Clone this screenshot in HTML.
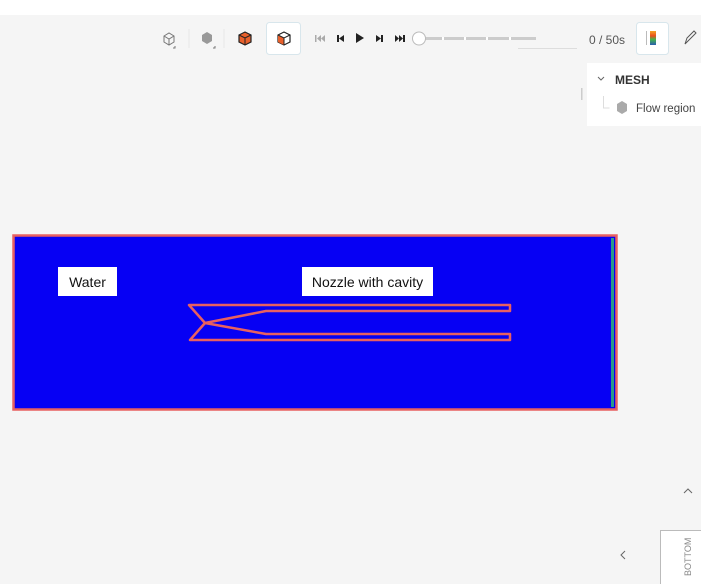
<!DOCTYPE html>
<html><head><meta charset="utf-8"><style>
body{margin:0;width:701px;height:584px;background:#f5f5f5;position:relative;overflow:hidden;font-family:"Liberation Sans",sans-serif}
.top{position:absolute;left:0;top:0;width:701px;height:15px;background:#fff}
.a{position:absolute}
.lbl{position:absolute;background:#fff;color:#111;font-size:14px;display:flex;align-items:center;justify-content:center;height:29px}
</style></head><body>
<div class="top"></div>
<svg class="a" style="left:0;top:0" width="701" height="584">
 <g stroke="#777" fill="none" stroke-width="1">
  <path d="M164 36l5-3 5 3v6l-5 3-5-3z M164 36l5 3 5-3 M169 39v6"/>
  <path d="M173 48h2v-2"/>
 </g>
 <path d="M202 35l5-3 5 3v6l-5 3-5-3z" fill="#999"/>
 <path d="M213 48h2v-2" stroke="#777" fill="none"/>
 <line x1="189" y1="29" x2="189" y2="48" stroke="#e6e6e6"/>
 <line x1="224" y1="29" x2="224" y2="48" stroke="#e6e6e6"/>
 <path d="M239 35l6-3 6 3v7l-6 3-6-3z" fill="#e8602c" stroke="#222" stroke-width="1.2"/>
 <path d="M239 35l6 3 6-3 M245 38v7" stroke="#222" fill="none"/>
 <rect x="266.5" y="22.5" width="34" height="32" rx="3" fill="#fff" stroke="#d8e6ec"/>
 <path d="M278 35l6-3 6 3v7l-6 3-6-3z" fill="#fff" stroke="#222" stroke-width="1.2"/>
 <path d="M278 35l6 3v7l-6-3z" fill="#e8602c"/>
 <path d="M278 35l6 3 6-3 M284 38v7" stroke="#222" fill="none"/>
 <g fill="#aaa"><rect x="315" y="35" width="1.5" height="7"/><path d="M321 35v7l-4-3.5z M325 35v7l-4-3.5z"/></g>
 <g fill="#222"><rect x="337" y="35" width="2" height="7"/><path d="M344 35v7l-5-3.5z"/>
 <path d="M356 33v10l8-5z"/>
 <path d="M376 35v7l5-3.5z"/><rect x="381" y="35" width="2" height="7"/>
 <path d="M395 35v7l4-3.5z M399 35v7l4-3.5z"/><rect x="403" y="35" width="2" height="7"/></g>
 <rect x="420" y="37" width="116" height="3" fill="#ccc"/>
 <g fill="#fff"><rect x="442" y="37" width="2" height="3"/><rect x="464" y="37" width="2" height="3"/><rect x="486" y="37" width="2" height="3"/><rect x="509" y="37" width="2" height="3"/></g>
 <circle cx="419" cy="38.5" r="6.5" fill="#fff" stroke="#bbb"/>
 <line x1="518" y1="48.5" x2="577" y2="48.5" stroke="#ddd"/>
 <text x="589" y="44" font-size="12" fill="#555">0 / 50s</text>
 <rect x="636.5" y="22.5" width="32" height="32" rx="3" fill="#fff" stroke="#d8e6ec"/>
 <rect x="646" y="31" width="1" height="14" fill="#bbb"/>
 <defs><linearGradient id="g" x1="0" y1="0" x2="0" y2="1"><stop offset="0" stop-color="#f5a623"/><stop offset=".35" stop-color="#e94e1b"/><stop offset=".6" stop-color="#44b549"/><stop offset="1" stop-color="#2a5db0"/></linearGradient></defs>
 <rect x="650" y="31" width="6" height="14" fill="url(#g)"/>
 <path d="M685 44l2-6 7-7 2 2-7 7z" fill="none" stroke="#555"/>
 <rect x="587" y="63" width="114" height="63" fill="#fff"/>
 <path d="M598 77l3 3 3-3" stroke="#666" fill="none"/>
 <text x="615" y="84" font-size="12" font-weight="bold" fill="#333">MESH</text>
 <path d="M603.5 96v12h6" stroke="#ddd" fill="none"/>
 <rect x="581" y="88" width="1.5" height="12" fill="#ccc"/>
 <path d="M617 104l5-3 5 3v7l-5 3-5-3z" fill="#aaa"/>
 <text x="636" y="112" font-size="11.5" fill="#444">Flow region</text>
 <rect x="13.5" y="235.5" width="603" height="174" fill="#0600f4" stroke="#e86060" stroke-width="2.5"/>
 <rect x="611" y="238" width="3" height="169" fill="#33c070" opacity=".8"/>
 <path d="M189 305L510 305L510 311L266 311L205 323L266 334L510 334L510 340L190 340L205 323Z" fill="none" stroke="#e86060" stroke-width="2.5" stroke-linejoin="round"/>
 <path d="M684 493l4-4 4 4" stroke="#666" fill="none"/>
 <path d="M625 551l-4 4 4 4" stroke="#666" fill="none"/>
 <rect x="660.5" y="530.5" width="45" height="60" fill="#fff" stroke="#bbb"/>
 <text transform="translate(691,576) rotate(-90)" font-size="9" fill="#888">BOTTOM</text>
</svg>
<div class="lbl" style="left:58px;top:267px;width:59px">Water</div>
<div class="lbl" style="left:302px;top:267px;width:131px">Nozzle with cavity</div>
</body></html>
